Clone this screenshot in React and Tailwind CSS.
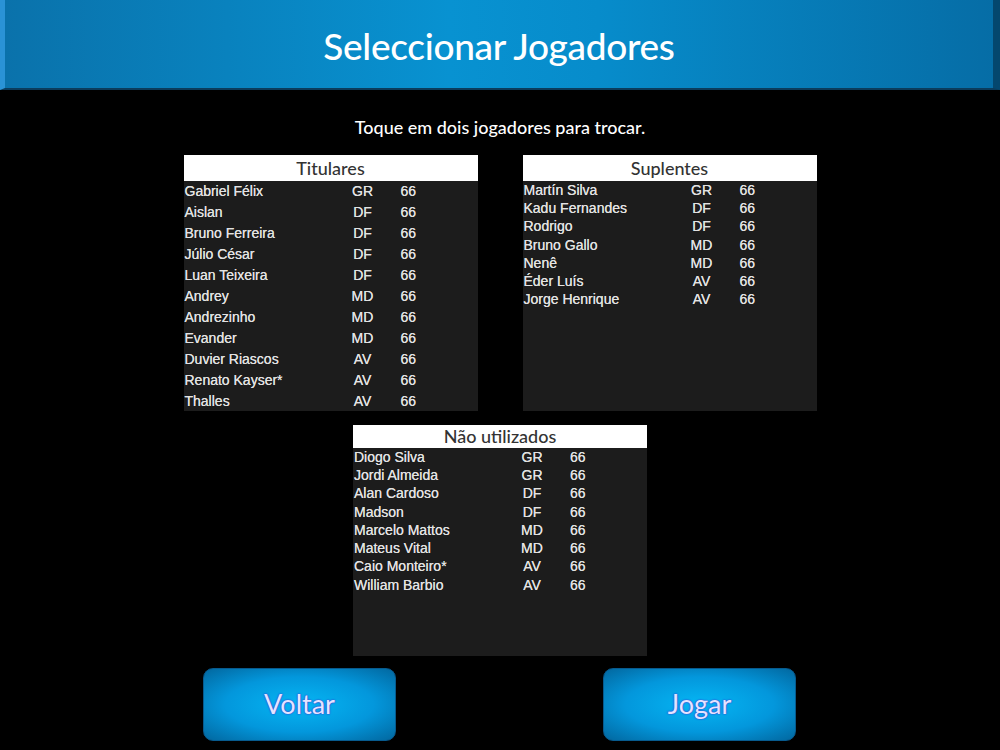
const titulares = [
  ["Gabriel Félix", "GR", 66],
  ["Aislan", "DF", 66],
  ["Bruno Ferreira", "DF", 66],
  ["Júlio César", "DF", 66],
  ["Luan Teixeira", "DF", 66],
  ["Andrey", "MD", 66],
  ["Andrezinho", "MD", 66],
  ["Evander", "MD", 66],
  ["Duvier Riascos", "AV", 66],
  ["Renato Kayser*", "AV", 66],
  ["Thalles", "AV", 66],
];

const suplentes = [
  ["Martín Silva", "GR", 66],
  ["Kadu Fernandes", "DF", 66],
  ["Rodrigo", "DF", 66],
  ["Bruno Gallo", "MD", 66],
  ["Nenê", "MD", 66],
  ["Éder Luís", "AV", 66],
  ["Jorge Henrique", "AV", 66],
];

const naoUtilizados = [
  ["Diogo Silva", "GR", 66],
  ["Jordi Almeida", "GR", 66],
  ["Alan Cardoso", "DF", 66],
  ["Madson", "DF", 66],
  ["Marcelo Mattos", "MD", 66],
  ["Mateus Vital", "MD", 66],
  ["Caio Monteiro*", "AV", 66],
  ["William Barbio", "AV", 66],
];

function PlayerPanel({ title, players, headerH, bodyH, rowH }) {
  return (
    <div className="w-[294px]">
      {/* white title bar */}
      <div
        className={`flex items-center justify-center bg-white text-[18px] font-medium text-[#333] font-['Lato',sans-serif] ${headerH}`}
      >
        {title}
      </div>
      <div className={`bg-[#1c1c1c] ${bodyH}`}>
        {players.map(([name, pos, rating], idx) => (
          <div
            key={idx}
            className={`flex items-center text-[14px] text-[#e2e2e2] font-['Liberation_Sans',Arial,sans-serif] [text-shadow:0_0_0.5px_#e2e2e2] ${rowH}`}
          >
            <span className="w-[164px] pl-[1px] truncate">{name}</span>
            <span className="w-[30px] text-center">{pos}</span>
            <span className="ml-[23px]">{rating}</span>
          </div>
        ))}
      </div>
    </div>
  );
}

function GameButton({ label }) {
  return (
    <button className="flex h-[73px] w-[193px] items-center justify-center rounded-[10px] border border-[#075a8e] bg-[radial-gradient(ellipse_at_center,#05b6f4_0%,#0397dc_55%,#02679f_100%)] text-[27px] text-[#e4e4ff] font-['Lato',sans-serif] [text-shadow:0_0_2px_#3b3bd0,0_0_1px_#3b3bd0]">
      {label}
    </button>
  );
}

export default function App() {
  return (
    <div className="min-h-[750px] w-full bg-black">
      {/* Top title bar */}
      <div className="flex h-[90px] items-center justify-center border-b-2 border-l-[5px] border-r-[7px] border-b-[#0b3c5c] border-l-[#2a93d6] border-r-[#04476e] bg-[linear-gradient(to_right,#0a72ab_0%,#0892d1_45%,#078ccb_60%,#066da6_100%)]">
        <h1 className="pt-[3px] text-[37px] font-medium text-white font-['Lato',sans-serif] tracking-[-0.3px]">
          Seleccionar Jogadores
        </h1>
      </div>

      <p className="mt-[27px] h-[20px] text-center text-[18px] font-medium leading-[20px] text-white font-['Lato',sans-serif]">
        Toque em dois jogadores para trocar.
      </p>

      <div className="mt-[18px] flex justify-center gap-[45px]">
        <PlayerPanel
          title="Titulares"
          players={titulares}
          headerH="h-[26px]"
          bodyH="h-[230px]"
          rowH="h-[21px]"
        />
        <PlayerPanel
          title="Suplentes"
          players={suplentes}
          headerH="h-[26px]"
          bodyH="h-[230px]"
          rowH="h-[18.3px]"
        />
      </div>

      <div className="mt-[14px] flex justify-center">
        <PlayerPanel
          title="Não utilizados"
          players={naoUtilizados}
          headerH="h-[23px]"
          bodyH="h-[208px]"
          rowH="h-[18.3px]"
        />
      </div>

      <div className="mt-[12px] flex justify-center gap-[207px] pr-[1px]">
        <GameButton label="Voltar" />
        <GameButton label="Jogar" />
      </div>
    </div>
  );
}
